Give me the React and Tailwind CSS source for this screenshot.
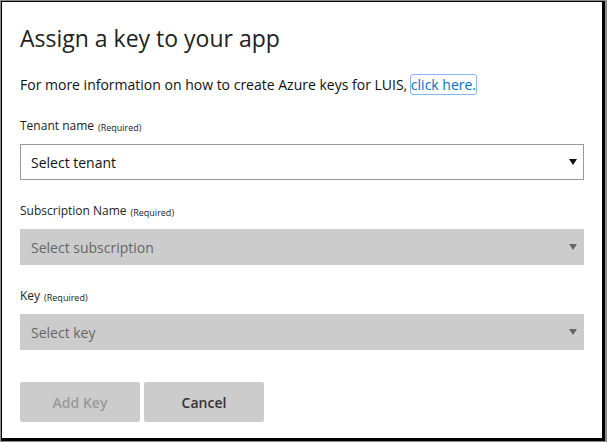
import React from "react";

function Arrow({ color }) {
  return (
    <svg width="8" height="6" viewBox="0 0 8 6" className="shrink-0">
      <path d="M0 0 L8 0 L4 6 Z" fill={color} />
    </svg>
  );
}

function Label({ text }) {
  return (
    <div className="h-[18px] flex items-end text-[12px] leading-none text-[#222]">
      <span>{text}</span>
      <span className="ml-[4px] text-[9px]">(Required)</span>
    </div>
  );
}

export default function App() {
  return (
    <div
      className="w-[607px] h-[442px] bg-[#8c8c8c] pl-[1px] pt-[1px]"
      style={{ fontFamily: '"Open Sans", "Noto Sans", sans-serif' }}
    >
      <div className="w-[604px] h-[440px] bg-white border-l border-t border-black border-r-[3px] border-b-[3px] pl-[18px] pr-[18px] pt-[21px]">
        <h1 className="text-[23px] leading-[30px] text-[#222]">Assign a key to your app</h1>
        <p className="mt-[20px] text-[14px] leading-[24px] text-[#111]">
          For more information on how to create Azure keys for LUIS,{" "}
          <a className="text-[#0072c6] outline outline-1 outline-[#8ab4f8] rounded-[2px]">click here.</a>
        </p>
        <div className="mt-[17px]">
          <Label text="Tenant name" />
        </div>
        <div className="mt-[12px] h-[36px] border border-[#999] flex items-center justify-between pl-[10px] pr-[6px] text-[14px] text-[#111]">
          <span>Select tenant</span>
          <Arrow color="#111" />
        </div>
        <div className="mt-[19px]">
          <Label text="Subscription Name" />
        </div>
        <div className="mt-[12px] h-[36px] bg-[#cccccc] flex items-center justify-between pl-[11px] pr-[7px] text-[14px] text-[#666]">
          <span>Select subscription</span>
          <Arrow color="#666" />
        </div>
        <div className="mt-[19px]">
          <Label text="Key" />
        </div>
        <div className="mt-[12px] h-[36px] bg-[#cccccc] flex items-center justify-between pl-[11px] pr-[7px] text-[14px] text-[#666]">
          <span>Select key</span>
          <Arrow color="#666" />
        </div>
        <div className="mt-[32px] flex gap-[4px]">
          <button className="w-[120px] h-[40px] bg-[#cccccc] rounded-[2px] text-[14px] font-semibold text-[#999]">Add Key</button>
          <button className="w-[120px] h-[40px] bg-[#cccccc] rounded-[2px] text-[14px] font-semibold text-[#333]">Cancel</button>
        </div>
      </div>
    </div>
  );
}
